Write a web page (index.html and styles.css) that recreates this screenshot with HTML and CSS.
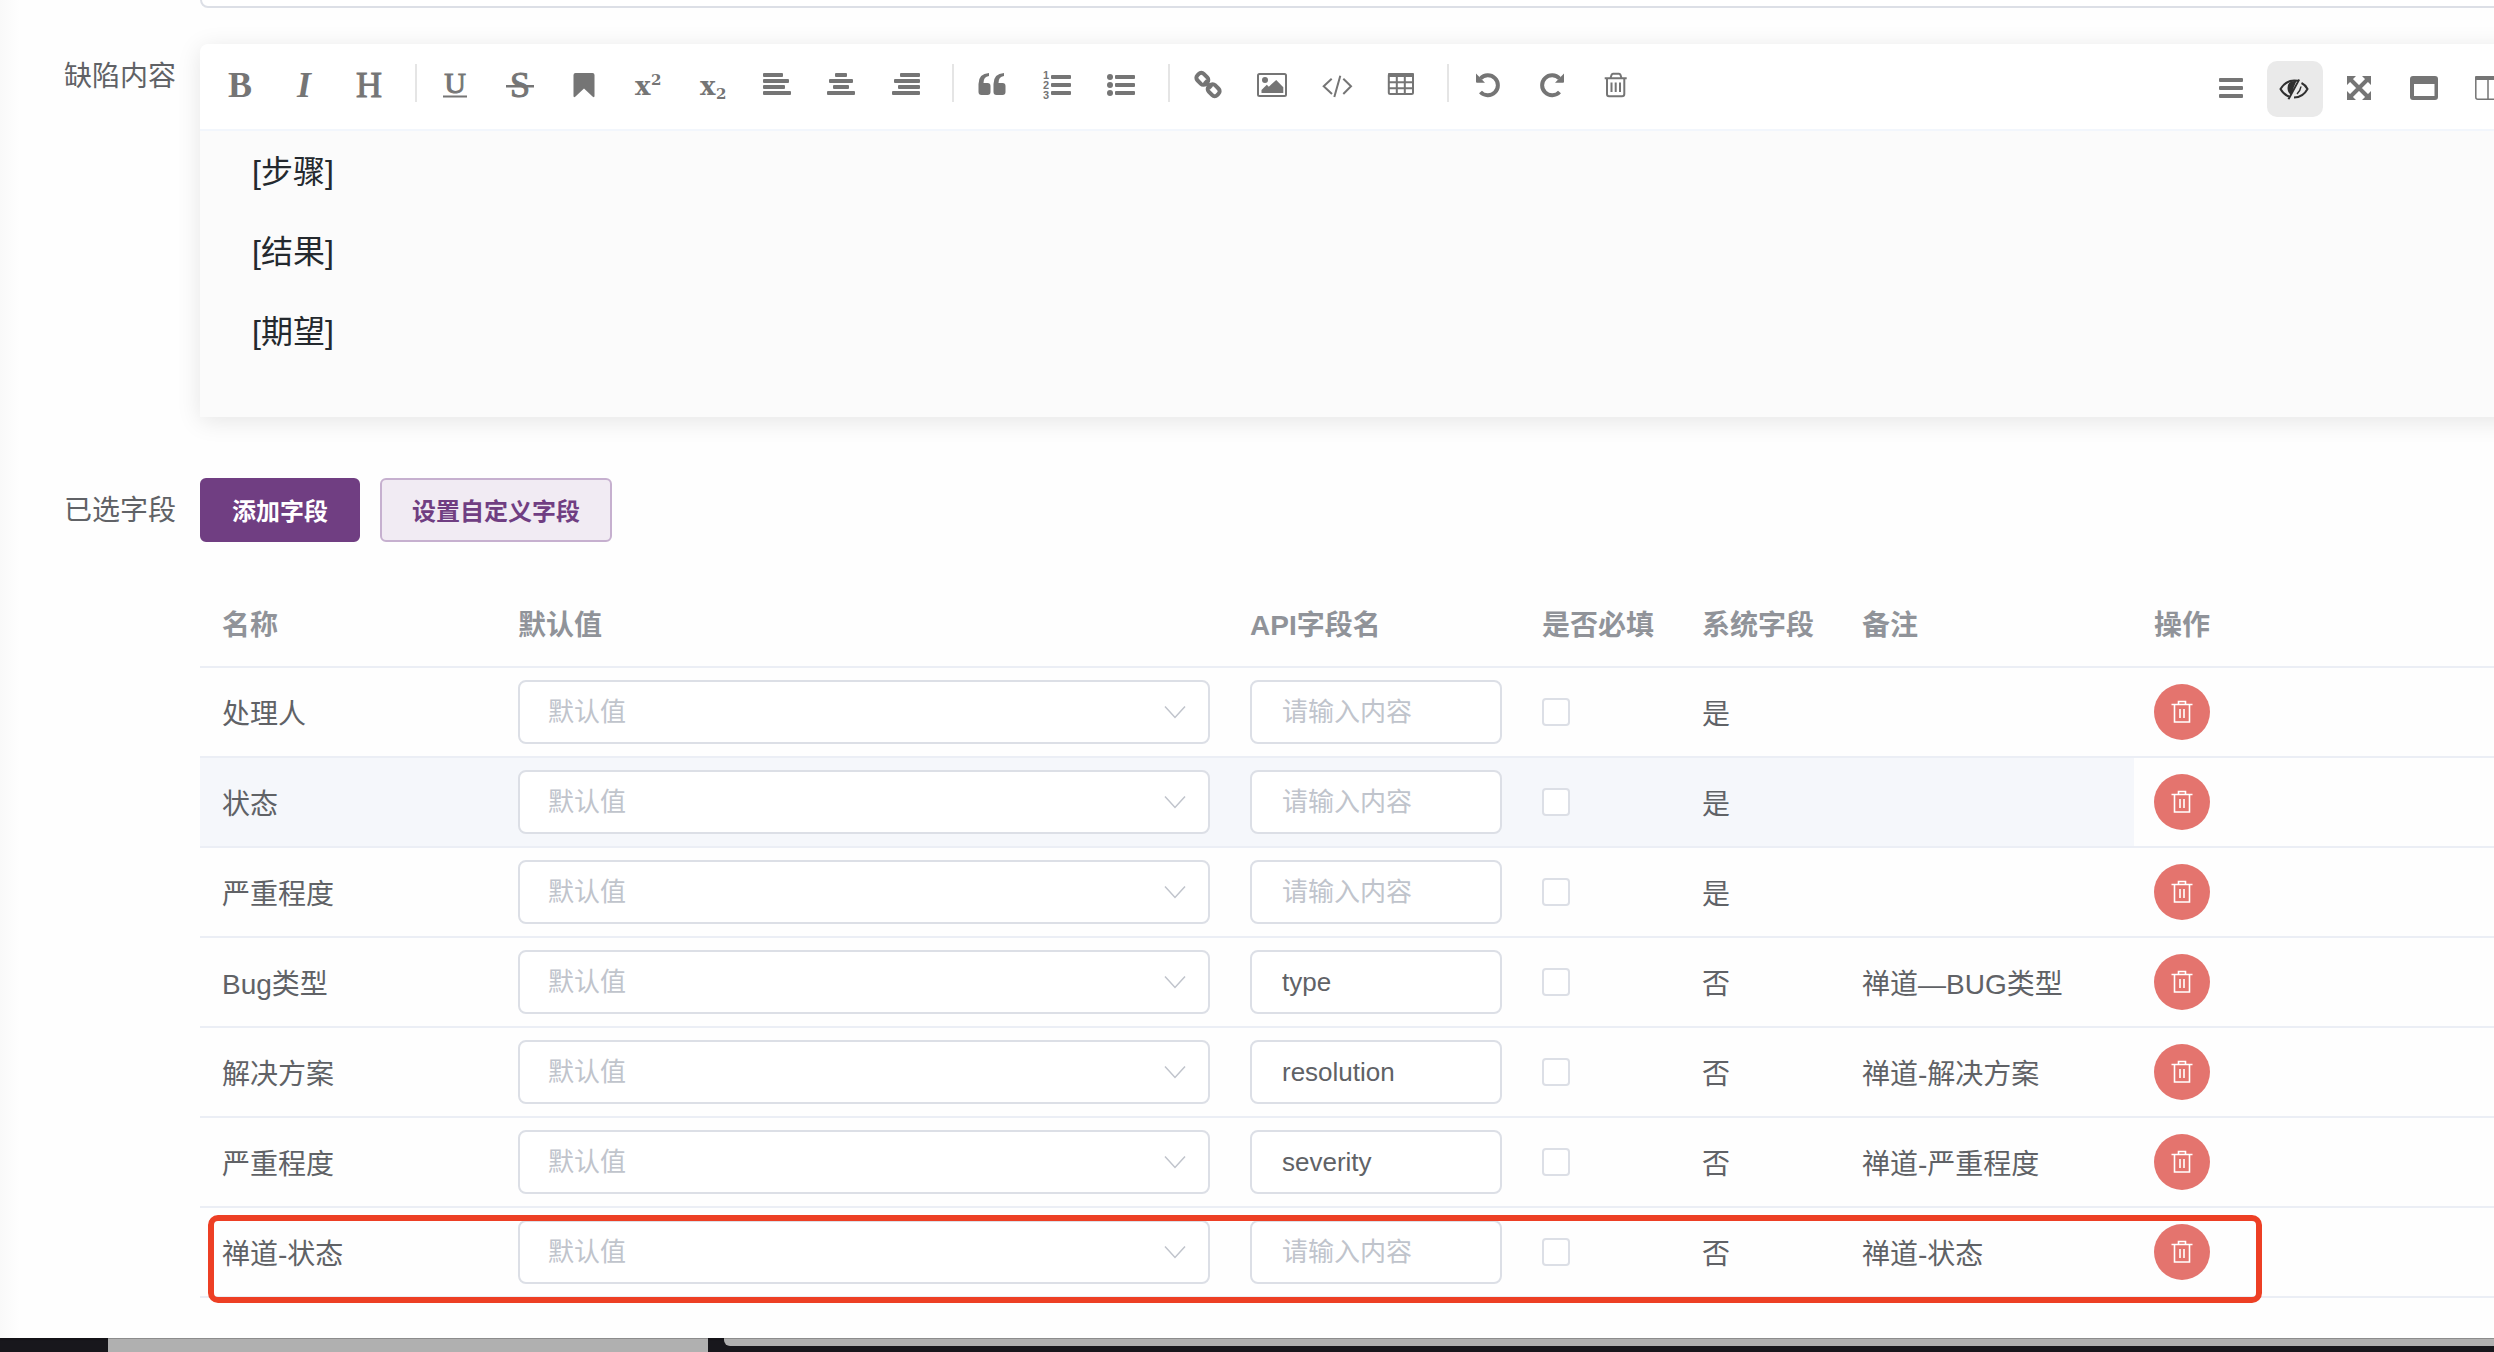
FILE: index.html
```
<!DOCTYPE html>
<html lang="zh-CN">
<head>
  <meta charset="UTF-8">
  <meta name="viewport" content="width=device-width, initial-scale=1.0">
  <title>缺陷模板</title>
  <link rel="stylesheet" href="styles.css">
</head>
<body>
  <!-- Shared icons -->
  <svg class="symbols" aria-hidden="true">
    <symbol id="icon-arrow" viewBox="0 0 22 14">
      <path d="M1 1.500L11 12.500L21 1.500" fill="none" stroke="currentColor" stroke-width="1.500"/>
    </symbol>
    <symbol id="icon-delete" viewBox="0 0 22 24">
      <path d="M0.500 4.500H21.500M3.500 4.500V22H18.500V4.500M7.500 4.500V1.500H14.500V4.500M9 9V18M13 9V18" fill="none" stroke="currentColor" stroke-width="1.600"/>
    </symbol>
  </svg>

  <main class="dialog">
    <form id="templateForm">
      <div class="form-row">
        <input type="text" class="title-input" aria-label="标题">
      </div>

      <!-- Markdown editor -->
      <div class="form-row">
        <span class="form-label" id="contentLabel">缺陷内容</span>
        <div class="editor">
          <div class="toolbar">
            <div class="tools-left">
              <button type="button" class="tool" title="粗体"><svg viewBox="0 0 56 56"><text class="letter bold" x="28" y="40">B</text></svg></button>
              <button type="button" class="tool" title="斜体"><svg viewBox="0 0 56 56"><text class="letter italic" x="28" y="40">I</text></svg></button>
              <button type="button" class="tool" title="标题"><svg viewBox="0 0 56 56"><text class="letter" x="28" y="40">H</text></svg></button>
              <span class="divider"></span>
              <button type="button" class="tool" title="下划线"><svg viewBox="0 0 56 56"><text class="letter small" x="28" y="36">U</text><rect x="16" y="38.500" width="24" height="2"/></svg></button>
              <button type="button" class="tool" title="中划线"><svg viewBox="0 0 56 56"><text class="letter" x="28" y="40">S</text><rect x="14" y="28" width="28" height="2.500"/></svg></button>
              <button type="button" class="tool" title="标记"><svg viewBox="0 0 56 56"><path d="M19.500 16H36.500Q38.500 16 38.500 18V39Q38.500 41 36.500 39.500L28 31.500L19.500 39.500Q17.500 41 17.500 39V18Q17.500 16 19.500 16Z"/></svg></button>
              <button type="button" class="tool" title="上角标"><svg viewBox="0 0 56 56"><text class="script" x="15" y="38">x</text><text class="script-num" x="31" y="28">2</text></svg></button>
              <button type="button" class="tool" title="下角标"><svg viewBox="0 0 56 56"><text class="script" x="15" y="38">x</text><text class="script-num" x="31" y="42">2</text></svg></button>
              <button type="button" class="tool" title="居左"><svg viewBox="0 0 56 56"><rect x="14" y="16" width="20" height="4" rx="1"/><rect x="14" y="22" width="26" height="4" rx="1"/><rect x="14" y="28" width="22" height="4" rx="1"/><rect x="14" y="34" width="28" height="4" rx="1"/></svg></button>
              <button type="button" class="tool" title="居中"><svg viewBox="0 0 56 56"><rect x="22" y="16" width="12" height="4" rx="1"/><rect x="16" y="22" width="24" height="4" rx="1"/><rect x="20" y="28" width="16" height="4" rx="1"/><rect x="14" y="34" width="28" height="4" rx="1"/></svg></button>
              <button type="button" class="tool" title="居右"><svg viewBox="0 0 56 56"><rect x="22" y="16" width="20" height="4" rx="1"/><rect x="16" y="22" width="26" height="4" rx="1"/><rect x="20" y="28" width="22" height="4" rx="1"/><rect x="14" y="34" width="28" height="4" rx="1"/></svg></button>
              <span class="divider"></span>
              <button type="button" class="tool" title="段落引用"><svg viewBox="0 0 56 56"><path d="M25 16V19Q19.500 19.500 19.500 26H23.500Q26.500 26 26.500 29V35Q26.500 38 23.500 38H17.500Q14.500 38 14.500 35V27Q14.500 16.500 25 16Z"/><path d="M40 16V19Q34.500 19.500 34.500 26H38.500Q41.500 26 41.500 29V35Q41.500 38 38.500 38H32.500Q29.500 38 29.500 35V27Q29.500 16.500 40 16Z"/></svg></button>
              <button type="button" class="tool" title="有序列表"><svg viewBox="0 0 56 56"><text class="list-num" x="14" y="22">1</text><text class="list-num" x="14" y="32">2</text><text class="list-num" x="14" y="42">3</text><rect x="22" y="18" width="20" height="4" rx="1"/><rect x="22" y="26" width="20" height="4" rx="1"/><rect x="22" y="34" width="20" height="4" rx="1"/></svg></button>
              <button type="button" class="tool" title="无序列表"><svg viewBox="0 0 56 56"><circle cx="17" cy="20" r="3"/><circle cx="17" cy="28" r="3"/><circle cx="17" cy="36" r="3"/><rect x="22" y="18" width="20" height="4" rx="1"/><rect x="22" y="26" width="20" height="4" rx="1"/><rect x="22" y="34" width="20" height="4" rx="1"/></svg></button>
              <span class="divider"></span>
              <button type="button" class="tool" title="链接"><svg viewBox="0 0 56 56"><g class="line thick" transform="rotate(45 28 27.500)"><rect x="14" y="23" width="12" height="9" rx="3.500"/><rect x="30" y="23" width="12" height="9" rx="3.500"/><path d="M23 27.500H33"/></g></svg></button>
              <button type="button" class="tool" title="添加图片"><svg viewBox="0 0 56 56"><rect class="line" x="14" y="17" width="28" height="22" rx="1.500"/><circle cx="21" cy="23" r="3"/><path d="M17.500 36V33L22.800 27.700L24.800 29.700L32.200 23L39.300 30.300V36Z"/></svg></button>
              <button type="button" class="tool" title="代码块"><svg viewBox="0 0 56 56"><path class="line" d="M22.700 21.700L14.700 29.300L23 37M31.300 18.700L25.300 40M34.300 21.700L42 29.300L34.300 37"/></svg></button>
              <button type="button" class="tool" title="表格"><svg viewBox="0 0 56 56"><rect class="line" x="15.800" y="17" width="24.200" height="20" rx="1.500"/><rect x="15" y="16" width="26" height="4" rx="1"/><path class="line" d="M23.800 19V37M31.800 19V37M16 25.300H40M16 31.300H40"/></svg></button>
              <span class="divider"></span>
              <button type="button" class="tool" title="上一步"><svg viewBox="0 0 56 56"><path class="line thick" d="M20.500 21.500A10 10 0 1 1 20.500 35"/><path d="M16 16.500L25 25.800H17Q16 25.800 16 24.800Z"/></svg></button>
              <button type="button" class="tool" title="下一步"><svg viewBox="0 0 56 56"><path class="line thick" d="M35.500 21.500A10 10 0 1 0 35.500 35"/><path d="M40 16.500L31 25.800H39Q40 25.800 40 24.800Z"/></svg></button>
              <button type="button" class="tool" title="清空"><svg viewBox="0 0 56 56"><path class="line" d="M16.700 21.300H38.700M19 21.300V37Q19 39.300 21 39.300H34Q36.300 39.300 36.300 37V21.300M22.500 21L23.500 18Q24 16.800 25 16.800H31Q32 16.800 32.500 18L33.500 21"/><path class="line" d="M23.500 25.500V35M27.700 25.500V35M32 25.500V35"/></svg></button>
            </div>
            <div class="tools-right">
              <button type="button" class="tool" title="导航目录"><svg viewBox="0 0 56 56"><rect x="16" y="17" width="24" height="4" rx="1"/><rect x="16" y="25" width="24" height="4" rx="1"/><rect x="16" y="33" width="24" height="4" rx="1"/></svg></button>
              <button type="button" class="tool selected" title="预览"><svg viewBox="0 0 56 56"><path class="line" d="M31 19.800Q20 17.500 13.500 28Q16.500 33.500 22 35.500M34.500 22Q38.500 24 40.500 28Q36 36.500 27 36.500"/><path d="M31.500 18L20.500 38L22.500 38.500L33 19ZM29.500 20Q20.500 19 20.500 27Q20.500 31 23.500 33.500Z"/><path class="line thin" d="M34 25.500Q33.500 29.500 30 33"/></svg></button>
              <button type="button" class="tool" title="全屏编辑"><svg viewBox="0 0 56 56"><path d="M16 15H25L16 24ZM40 15V24L31 15ZM16 39V30L25 39ZM40 39H31L40 30Z"/><path class="line thick" d="M19 18L37 36M37 18L19 36"/></svg></button>
              <button type="button" class="tool" title="沉浸式阅读"><svg viewBox="0 0 56 56"><path fill-rule="evenodd" d="M17 15H39Q42 15 42 18V36Q42 39 39 39H17Q14 39 14 36V18Q14 15 17 15ZM18 23V35H38.500V23Z"/></svg></button>
              <button type="button" class="tool" title="单双栏"><svg viewBox="0 0 56 56"><rect class="line thin" x="15.800" y="16" width="24.200" height="22.200" rx="2"/><rect x="15" y="15" width="26" height="4" rx="1"/><path class="line thin" d="M28 19V38"/></svg></button>
            </div>
          </div>
          <div class="editor-body" role="textbox" aria-labelledby="contentLabel">
            <p>[步骤]</p>
            <p>[结果]</p>
            <p>[期望]</p>
          </div>
        </div>
      </div>

      <!-- Selected fields -->
      <div class="form-row fields-row">
        <span class="form-label">已选字段</span>
        <div class="fields">
          <div class="actions">
            <button type="button" class="btn btn-primary">添加字段</button>
            <button type="button" class="btn btn-plain">设置自定义字段</button>
          </div>

          <table class="field-table">
            <colgroup>
              <col class="col-name">
              <col class="col-default">
              <col class="col-api">
              <col class="col-flag">
              <col class="col-flag">
              <col class="col-remark">
              <col>
            </colgroup>
            <thead>
              <tr>
                <th>名称</th>
                <th>默认值</th>
                <th>API字段名</th>
                <th>是否必填</th>
                <th>系统字段</th>
                <th>备注</th>
                <th>操作</th>
              </tr>
            </thead>
            <tbody>
              <tr>
                <td>处理人</td>
                <td><div class="select-box"><select aria-label="处理人默认值"><option>默认值</option></select><svg class="arrow"><use href="#icon-arrow"/></svg></div></td>
                <td><input type="text" class="text-input" placeholder="请输入内容" aria-label="处理人API字段名"></td>
                <td><input type="checkbox" class="check" aria-label="处理人是否必填"></td>
                <td>是</td>
                <td></td>
                <td><button type="button" class="btn-delete" aria-label="删除"><svg><use href="#icon-delete"/></svg></button></td>
              </tr>
              <tr class="active">
                <td>状态</td>
                <td><div class="select-box"><select aria-label="状态默认值"><option>默认值</option></select><svg class="arrow"><use href="#icon-arrow"/></svg></div></td>
                <td><input type="text" class="text-input" placeholder="请输入内容" aria-label="状态API字段名"></td>
                <td><input type="checkbox" class="check" aria-label="状态是否必填"></td>
                <td>是</td>
                <td></td>
                <td><button type="button" class="btn-delete" aria-label="删除"><svg><use href="#icon-delete"/></svg></button></td>
              </tr>
              <tr>
                <td>严重程度</td>
                <td><div class="select-box"><select aria-label="严重程度默认值"><option>默认值</option></select><svg class="arrow"><use href="#icon-arrow"/></svg></div></td>
                <td><input type="text" class="text-input" placeholder="请输入内容" aria-label="严重程度API字段名"></td>
                <td><input type="checkbox" class="check" aria-label="严重程度是否必填"></td>
                <td>是</td>
                <td></td>
                <td><button type="button" class="btn-delete" aria-label="删除"><svg><use href="#icon-delete"/></svg></button></td>
              </tr>
              <tr>
                <td>Bug类型</td>
                <td><div class="select-box"><select aria-label="Bug类型默认值"><option>默认值</option></select><svg class="arrow"><use href="#icon-arrow"/></svg></div></td>
                <td><input type="text" class="text-input" placeholder="请输入内容" value="type" aria-label="Bug类型API字段名"></td>
                <td><input type="checkbox" class="check" aria-label="Bug类型是否必填"></td>
                <td>否</td>
                <td>禅道—BUG类型</td>
                <td><button type="button" class="btn-delete" aria-label="删除"><svg><use href="#icon-delete"/></svg></button></td>
              </tr>
              <tr>
                <td>解决方案</td>
                <td><div class="select-box"><select aria-label="解决方案默认值"><option>默认值</option></select><svg class="arrow"><use href="#icon-arrow"/></svg></div></td>
                <td><input type="text" class="text-input" placeholder="请输入内容" value="resolution" aria-label="解决方案API字段名"></td>
                <td><input type="checkbox" class="check" aria-label="解决方案是否必填"></td>
                <td>否</td>
                <td>禅道-解决方案</td>
                <td><button type="button" class="btn-delete" aria-label="删除"><svg><use href="#icon-delete"/></svg></button></td>
              </tr>
              <tr>
                <td>严重程度</td>
                <td><div class="select-box"><select aria-label="严重程度默认值"><option>默认值</option></select><svg class="arrow"><use href="#icon-arrow"/></svg></div></td>
                <td><input type="text" class="text-input" placeholder="请输入内容" value="severity" aria-label="严重程度API字段名"></td>
                <td><input type="checkbox" class="check" aria-label="严重程度是否必填"></td>
                <td>否</td>
                <td>禅道-严重程度</td>
                <td><button type="button" class="btn-delete" aria-label="删除"><svg><use href="#icon-delete"/></svg></button></td>
              </tr>
              <tr>
                <td>禅道-状态</td>
                <td><div class="select-box"><select aria-label="禅道-状态默认值"><option>默认值</option></select><svg class="arrow"><use href="#icon-arrow"/></svg></div></td>
                <td><input type="text" class="text-input" placeholder="请输入内容" aria-label="禅道-状态API字段名"></td>
                <td><input type="checkbox" class="check" aria-label="禅道-状态是否必填"></td>
                <td>否</td>
                <td>禅道-状态</td>
                <td><button type="button" class="btn-delete" aria-label="删除"><svg><use href="#icon-delete"/></svg></button></td>
              </tr>
            </tbody>
          </table>
          <div class="mark-box"></div>
        </div>
      </div>
    </form>
  </main>

  <!-- Page behind the dialog -->
  <div class="backdrop">
    <div class="panel panel-left"></div>
    <div class="panel panel-right"></div>
  </div>
</body>
</html>
```
FILE: styles.css
```
* {
  box-sizing: border-box;
}
body {
  margin: 0;
  min-height: 100vh;
  display: flex;
  flex-direction: column;
  overflow: hidden;
  background: #18171c;
  color: #606266;
  font-family: "Liberation Sans", "Noto Sans CJK SC", sans-serif;
  font-size: 28px;
}
button,
input,
select {
  font-family: inherit;
}
.symbols {
  display: none;
}

/* the dialog runs past the right edge of the window */
.dialog {
  margin-right: -34px;
  padding-bottom: 40px;
  background: linear-gradient(to right, #f9f9f9, #fefefe 20px);
  box-shadow: 0 1px 2px rgba(0, 0, 0, 0.3);
}
.form-row {
  display: flex;
}
.form-label {
  flex: none;
  width: 200px;
  padding-right: 24px;
  line-height: 66px;
  text-align: right;
}
.title-input {
  flex: 1;
  height: 64px;
  margin: -56px 0 36px 200px;
  border: 2px solid #dcdfe6;
  border-radius: 8px;
  background: #fff;
}

/* editor */
.editor {
  flex: 1;
  border-radius: 8px 8px 0 0;
  background: #fff;
  box-shadow: 0 4px 24px rgba(0, 0, 0, 0.1);
}
.toolbar {
  display: flex;
  justify-content: space-between;
  align-items: flex-start;
  height: 87px;
  padding: 13px 12px 0;
  border-bottom: 2px solid #f2f6fc;
  font-size: 30px;
  line-height: 56px;
  white-space: nowrap;
}
.tools-right {
  padding-top: 4px;
}
.tool {
  display: inline-block;
  width: 56px;
  height: 56px;
  padding: 0;
  border: none;
  border-radius: 10px;
  background: none;
  color: #757575;
  vertical-align: top;
  cursor: pointer;
}
.tool svg {
  display: block;
  width: 56px;
  height: 56px;
  fill: currentColor;
}
.tool:hover,
.tool.selected {
  background: #eaeaea;
}
.tool.selected {
  color: #303030;
}
.tool .line {
  fill: none;
  stroke: currentColor;
  stroke-width: 2;
}
.tool .thick {
  stroke-width: 4;
}
.tool .thin {
  stroke-width: 1.5;
}
.letter {
  font-family: "Liberation Serif", serif;
  font-size: 36px;
  text-anchor: middle;
  stroke: currentColor;
  stroke-width: 1;
}
.letter.bold {
  font-weight: bold;
  stroke: none;
}
.letter.italic {
  font-style: italic;
  font-weight: bold;
  stroke: none;
}
.letter.small {
  font-size: 30px;
}
.script {
  font: bold 26px "DejaVu Serif", serif;
}
.script-num {
  font: bold 15px "DejaVu Serif", serif;
}
.list-num {
  font: bold 11px "Liberation Sans", sans-serif;
}
.divider {
  display: inline-block;
  width: 2px;
  height: 38px;
  margin: 7px 2px 0 10px;
  background: #e5e5e5;
  vertical-align: top;
}
.editor-body {
  padding: 17px 52px 29px;
  background: #fbfbfb;
  color: #24292e;
  font-size: 32px;
  line-height: 48px;
}
.editor-body p {
  margin: 0 0 32px;
}

/* selected fields */
.fields-row {
  margin-top: 61px;
}
.fields {
  position: relative;
  flex: 1;
}
.actions {
  display: flex;
  gap: 20px;
}
.btn {
  height: 64px;
  padding: 0 30px 2px;
  border: 2px solid #703e82;
  border-radius: 6px;
  font-size: 24px;
  font-weight: bold;
  cursor: pointer;
}
.btn-primary {
  background: #703e82;
  color: #fff;
}
.btn-plain {
  border-color: #c6b0cf;
  background: #f1ebf3;
  color: #703e82;
}
.field-table {
  width: 100%;
  margin-top: 38px;
  border-spacing: 0;
  table-layout: fixed;
}
.col-name {
  width: 298px;
}
.col-default {
  width: 732px;
}
.col-api,
.col-remark {
  width: 292px;
}
.col-flag {
  width: 160px;
}
.field-table th,
.field-table td {
  padding: 12px 20px;
  border-bottom: 2px solid #ebeef5;
  text-align: left;
  vertical-align: middle;
}
.field-table th:first-child,
.field-table td:first-child {
  padding-left: 22px;
}
.field-table th {
  height: 88px;
  color: #909399;
  font-weight: bold;
}
.field-table td {
  height: 90px;
}
.field-table .active td:not(:last-child) {
  background: #f5f7fb;
}
.select-box {
  position: relative;
}
.select-box select,
.text-input {
  display: block;
  width: 100%;
  height: 64px;
  padding: 0 30px;
  border: 2px solid #dcdfe6;
  border-radius: 8px;
  background: #fff;
  color: #606266;
  font-size: 26px;
}
.select-box select {
  appearance: none;
  padding: 0 28px;
  color: #c0c4cc;
}
.text-input::placeholder {
  color: #c0c4cc;
}
.arrow {
  position: absolute;
  top: 25px;
  right: 24px;
  width: 22px;
  height: 14px;
  color: #c0c4cc;
  pointer-events: none;
}
.check {
  display: block;
  appearance: none;
  width: 28px;
  height: 28px;
  margin: 0;
  border: 2px solid #dcdfe6;
  border-radius: 4px;
  background: #fff;
}
.btn-delete {
  display: flex;
  align-items: center;
  justify-content: center;
  width: 56px;
  height: 56px;
  padding: 0;
  border: none;
  border-radius: 50%;
  background: #e4746e;
  color: #fff;
  cursor: pointer;
}
.btn-delete svg {
  width: 22px;
  height: 24px;
}

/* red frame over the last row */
.mark-box {
  position: absolute;
  left: 8px;
  right: 266px;
  bottom: -5px;
  height: 88px;
  border: 6px solid #ed3f24;
  border-radius: 10px;
  pointer-events: none;
}

/* page behind */
.backdrop {
  display: flex;
  flex: 1;
  gap: 16px;
  padding-left: 108px;
}
.panel {
  background: #b0b0b0;
  border-top: 1px solid #8c8c8c;
}
.panel-left {
  flex: 0 0 600px;
}
.panel-right {
  flex: 1;
  height: 8px;
  border-bottom-left-radius: 6px;
}
```
